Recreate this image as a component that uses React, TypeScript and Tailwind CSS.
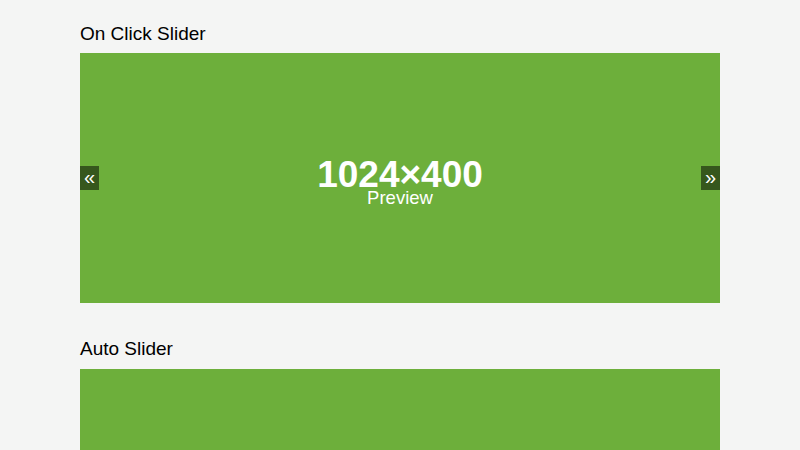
function Slide() {
  return (
    <div className="flex h-full w-full flex-col items-center justify-center bg-[#6daf3b] text-white">
      <div className="pt-[6px] text-[37px] font-bold leading-[40px]">1024×400</div>
      <div className="-mt-[7px] text-[18.5px] leading-[20px]">Preview</div>
    </div>
  );
}

function Slider({ arrows }: { arrows?: boolean }) {
  return (
    <div className="relative h-[250px] w-[640px]">
      <Slide />
      {arrows && (
        <>
          <button className="absolute left-0 top-[113px] flex h-[24px] w-[19px] items-center justify-center bg-black/50 pb-[2px] text-[20px] leading-none text-white">
            «
          </button>
          <button className="absolute right-0 top-[113px] flex h-[24px] w-[19px] items-center justify-center bg-black/50 pb-[2px] text-[20px] leading-none text-white">
            »
          </button>
        </>
      )}
    </div>
  );
}

export default function App() {
  return (
    <div className="min-h-[450px] bg-[#f4f5f4] pl-[80px] pt-[23px] font-['Liberation_Sans',Arial,sans-serif] text-black">
      <h2 className="mb-[8px] text-[19px] leading-[22px]">On Click Slider</h2>
      <Slider arrows />
      <h2 className="mb-[9px] mt-[35px] text-[19px] leading-[22px]">Auto Slider</h2>
      <Slider />
    </div>
  );
}
